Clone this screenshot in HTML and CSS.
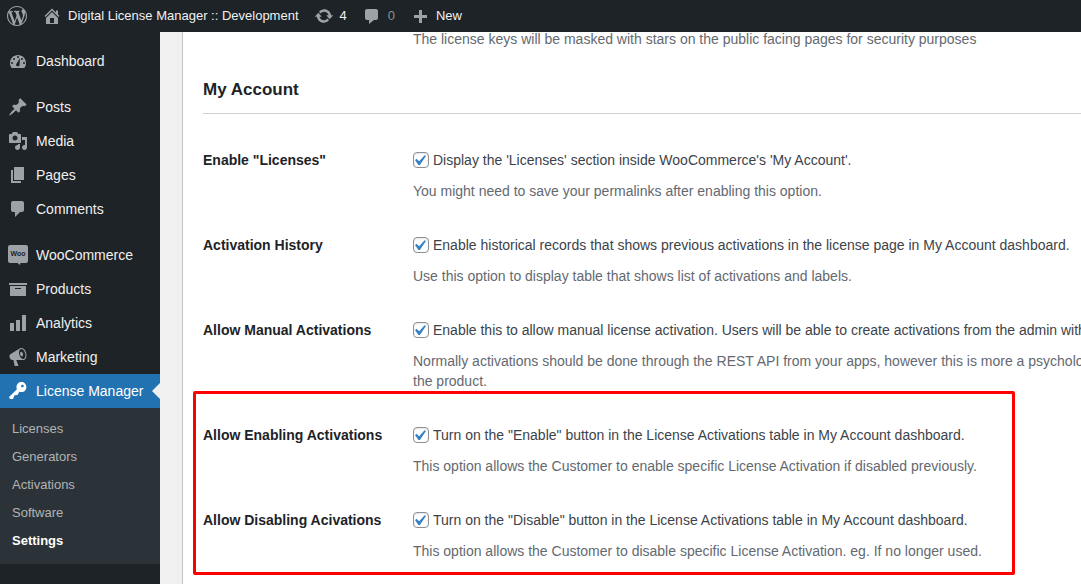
FILE: index.html
```html
<!DOCTYPE html>
<html lang="en">
<head>
    <meta charset="UTF-8">
    <meta name="viewport" content="width=device-width, initial-scale=1.0">
    <title>Settings - Digital License Manager</title>
    <link rel="stylesheet" href="styles.css">
</head>
<body>
    <header class="adminbar">
        <a class="bar-item bar-logo" href="#" aria-label="About WordPress">
            <svg class="icon" viewBox="0 0 20 20"><path d="M20 10c0-5.51-4.49-10-10-10C4.48 0 0 4.49 0 10c0 5.52 4.48 10 10 10 5.51 0 10-4.48 10-10zM7.78 15.37L4.37 6.22c.55-.02 1.17-.08 1.17-.08.5-.06.44-1.13-.06-1.11 0 0-1.45.11-2.37.11-.18 0-.37 0-.58-.01C4.12 2.69 6.87 1.11 10 1.11c2.33 0 4.45.87 6.05 2.34-.68-.11-1.65.39-1.65 1.58 0 .74.45 1.36.9 2.1.35.61.55 1.36.55 2.46 0 1.49-1.4 5-1.4 5l-3.03-8.37c.54-.02.82-.17.82-.17.5-.05.44-1.25-.06-1.22 0 0-1.44.12-2.38.12-.87 0-2.33-.12-2.33-.12-.5-.03-.56 1.2-.06 1.22l.92.08 1.26 3.41zM17.41 10c.24-.64.74-1.87.43-4.25.7 1.29 1.05 2.71 1.05 4.25 0 3.29-1.73 6.24-4.4 7.78.97-2.59 1.94-5.2 2.92-7.78zM6.1 18.09C3.12 16.65 1.11 13.53 1.11 10c0-1.3.23-2.48.72-3.59C3.25 10.3 4.67 14.2 6.1 18.09zm4.03-6.63l2.58 6.98c-.86.29-1.76.45-2.71.45-.79 0-1.57-.11-2.29-.33.81-2.38 1.62-4.74 2.42-7.1z"/></svg>
        </a>
        <a class="bar-item" href="#">
            <svg class="icon" viewBox="0 0 20 20"><path d="M16 8.5l1.53 1.53-1.06 1.06L10 4.6l-6.47 6.49-1.06-1.06L10 2.5l4 4v-2h2v4zm-6-2.46l6 5.99V18H4v-5.97zM12 17v-5H8v5h4z"/></svg>
            Digital License Manager :: Development
        </a>
        <a class="bar-item" href="#">
            <svg class="icon" viewBox="0 0 20 20"><path d="M10.2 3.28c3.53 0 6.43 2.61 6.92 6h2.08l-3.5 4-3.5-4h2.32c-.45-1.97-2.21-3.45-4.32-3.45-1.45 0-2.73.71-3.54 1.78L4.95 5.66C6.23 4.2 8.11 3.28 10.2 3.28zm-.4 13.44c-3.52 0-6.43-2.61-6.92-6H.8l3.5-4c1.17 1.33 2.33 2.67 3.5 4H5.48c.45 1.97 2.21 3.45 4.32 3.45 1.45 0 2.73-.71 3.54-1.78l1.71 1.95c-1.28 1.46-3.15 2.38-5.25 2.38z"/></svg>
            4
        </a>
        <a class="bar-item" href="#">
            <svg class="icon" viewBox="0 0 20 20"><path d="M5 3h9c1.1 0 2 .9 2 2v7c0 1.1-.9 2-2 2h-2l-5 4v-4H5c-1.1 0-2-.9-2-2V5c0-1.1.9-2 2-2z"/></svg>
            <span class="count-zero">0</span>
        </a>
        <a class="bar-item" href="#">
            <svg class="icon" viewBox="0 0 20 20"><path d="M17 9v3h-5v5H9v-5H4V9h5V4h3v5h5z"/></svg>
            New
        </a>
    </header>

    <div class="layout">
        <nav class="sidebar">
            <ul class="menu">
                <li><a class="menu-link" href="#">
                    <svg class="icon" viewBox="0 0 20 20"><path fill-rule="evenodd" d="M3.76 17h12.48c1.1-1.37 1.76-3.11 1.76-5 0-4.42-3.58-8-8-8s-8 3.58-8 8c0 1.89.66 3.63 1.76 5zM9 6a1 1 0 1 0 2 0a1 1 0 1 0-2 0zM5 8a1 1 0 1 0 2 0a1 1 0 1 0-2 0zM13 8a1 1 0 1 0 2 0a1 1 0 1 0-2 0zM3 12a1 1 0 1 0 2 0a1 1 0 1 0-2 0zM15 12a1 1 0 1 0 2 0a1 1 0 1 0-2 0zM8.6 12.5L12 7l-.4 6.5c0 1.1-.7 2-1.6 2s-2-.9-2-2c0-.4.2-.8.6-1z"/></svg>
                    Dashboard</a></li>
                <li class="separator"></li>
                <li><a class="menu-link" href="#">
                    <svg class="icon" viewBox="0 0 20 20"><path d="M10.44 3.02l1.82-1.82 6.36 6.35-1.83 1.82c-1.05-.68-2.48-.57-3.41.36l-.75.75c-.92.93-1.04 2.35-.35 3.41l-1.83 1.82-2.41-2.41-2.8 2.79c-.42.42-3.38 2.71-3.8 2.29s1.86-3.39 2.28-3.81l2.79-2.79L4.1 9.36l1.83-1.82c1.05.69 2.48.57 3.4-.36l.75-.75c.93-.92 1.05-2.35.36-3.41z"/></svg>
                    Posts</a></li>
                <li><a class="menu-link" href="#">
                    <svg class="icon" viewBox="0 0 20 20"><path d="M13 11V4c0-.55-.45-1-1-1h-1.67L9 1H5L3.67 3H2c-.55 0-1 .45-1 1v7c0 .55.45 1 1 1h10c.55 0 1-.45 1-1zM7 4.5c1.38 0 2.5 1.12 2.5 2.5S8.38 9.5 7 9.5 4.5 8.38 4.5 7 5.62 4.5 7 4.5zM14 6h5v10.5c0 1.38-1.12 2.5-2.5 2.5S14 17.88 14 16.5s1.12-2.5 2.5-2.5c.17 0 .34.02.5.05V9h-3V6zm-4 8.05V13h2v3.5c0 1.38-1.12 2.5-2.5 2.5S7 17.88 7 16.5 8.12 14 9.5 14c.17 0 .34.02.5.05z"/></svg>
                    Media</a></li>
                <li><a class="menu-link" href="#">
                    <svg class="icon" viewBox="0 0 20 20"><path d="M6 15V2h10v13H6zm-1 1h8v2H3V5h2v11z"/></svg>
                    Pages</a></li>
                <li><a class="menu-link" href="#">
                    <svg class="icon" viewBox="0 0 20 20"><path d="M5 2h9c1.1 0 2 .9 2 2v7c0 1.1-.9 2-2 2h-2l-5 5v-5H5c-1.1 0-2-.9-2-2V4c0-1.1.9-2 2-2z"/></svg>
                    Comments</a></li>
                <li class="separator"></li>
                <li><a class="menu-link" href="#">
                    <svg class="icon" viewBox="0 0 20 20"><path d="M2 0h16a2 2 0 0 1 2 2v14a2 2 0 0 1-2 2h-5.500l-.5 2-2.500-2H2a2 2 0 0 1-2-2V2a2 2 0 0 1 2-2z"/><text class="woo" x="10" y="11" text-anchor="middle">Woo</text></svg>
                    WooCommerce</a></li>
                <li><a class="menu-link" href="#">
                    <svg class="icon" viewBox="0 0 20 20"><path d="M19 4v2H1V4h18zM2 7h16v10H2V7zm11 3V9H7v1h6z"/></svg>
                    Products</a></li>
                <li><a class="menu-link" href="#">
                    <svg class="icon" viewBox="0 0 20 20"><path d="M18 18V2h-4v16h4zm-6 0V7H8v11h4zm-6 0v-8H2v8h4z"/></svg>
                    Analytics</a></li>
                <li><a class="menu-link" href="#">
                    <svg class="icon" viewBox="0 0 20 20"><path d="M18.15 5.94c.46 1.62.38 3.22-.02 4.48-.42 1.28-1.26 2.18-2.3 2.48-.16.06-.26.06-.4.06-.06.02-.12.02-.18.02-.06.02-.14.02-.22.02h-6.8l2.22 5.5c.02.14-.06.26-.14.34-.08.1-.24.16-.34.16H6.95c-.1 0-.26-.06-.34-.16-.08-.08-.16-.2-.14-.34l-1-5.5H4.25l-.02-.02c-.5.06-1.08-.18-1.54-.62s-.88-1.08-1.06-1.88c-.24-.8-.2-1.56-.02-2.2.18-.62.58-1.08 1.06-1.3l.02-.02 9-5.4c.1-.06.18-.1.24-.16.06-.04.14-.08.24-.12.16-.08.28-.12.5-.18 1.04-.3 2.24.1 3.22.98s1.84 2.24 2.26 3.86zm-2.58 5.98h-.02c.4-.1.74-.34 1.04-.7.58-.7.86-1.76.86-3.04 0-.64-.1-1.3-.28-1.98-.34-1.36-1.02-2.5-1.78-3.24s-1.68-1.1-2.46-.88c-.82.22-1.4.96-1.7 2-.32 1.04-.28 2.36.06 3.72.38 1.36 1 2.5 1.8 3.24.78.74 1.62 1.1 2.48.88zm-2.54-7.08c.22-.04.42-.02.62.04.38.16.76.48 1.02 1s.42 1.2.42 1.78c0 .3-.04.56-.12.8-.18.48-.44.84-.86.94-.34.1-.8-.06-1.14-.4s-.64-.86-.78-1.5c-.18-.62-.12-1.24.02-1.72s.48-.84.82-.94z"/></svg>
                    Marketing</a></li>
                <li>
                    <a class="menu-link current" href="#">
                    <svg class="icon" viewBox="0 0 20 20"><path d="M16.95 2.58c1.96 1.95 1.96 5.12 0 7.07-1.51 1.51-3.75 1.84-5.59 1.01l-1.87 3.31-2.99.31L5 18H2l-1-2 7.95-7.69c-.92-1.87-.62-4.18.93-5.73 1.95-1.96 5.12-1.96 7.07 0zm-2.51 3.79c.74 0 1.33-.6 1.33-1.34 0-.73-.59-1.33-1.33-1.33-.73 0-1.33.6-1.33 1.33 0 .74.6 1.34 1.33 1.34z"/></svg>
                    License Manager</a>
                    <ul class="submenu">
                        <li><a href="#">Licenses</a></li>
                        <li><a href="#">Generators</a></li>
                        <li><a href="#">Activations</a></li>
                        <li><a href="#">Software</a></li>
                        <li><a class="active" href="#">Settings</a></li>
                    </ul>
                </li>
            </ul>
        </nav>

        <main class="content">
            <form class="panel">
                <p class="description indent">The license keys will be masked with stars on the public facing pages for security purposes</p>

                <h2>My Account</h2>

                <div class="row">
                    <div class="row-title">Enable "Licenses"</div>
                    <div class="field">
                        <input type="checkbox" id="licenses" checked>
                        <label for="licenses">Display the 'Licenses' section inside WooCommerce's 'My Account'.</label>
                        <p class="description">You might need to save your permalinks after enabling this option.</p>
                    </div>
                </div>
                <div class="row">
                    <div class="row-title">Activation History</div>
                    <div class="field">
                        <input type="checkbox" id="history" checked>
                        <label for="history">Enable historical records that shows previous activations in the license page in My Account dashboard.</label>
                        <p class="description">Use this option to display table that shows list of activations and labels.</p>
                    </div>
                </div>
                <div class="row">
                    <div class="row-title">Allow Manual Activations</div>
                    <div class="field">
                        <input type="checkbox" id="manual" checked>
                        <label for="manual">Enable this to allow manual license activation. Users will be able to create activations from the admin with</label>
                        <p class="description">Normally activations should be done through the REST API from your apps, however this is more a psychological<br>the product.</p>
                    </div>
                </div>

                <div class="highlight">
                    <div class="row">
                        <div class="row-title">Allow Enabling Activations</div>
                        <div class="field">
                            <input type="checkbox" id="enabling" checked>
                            <label for="enabling">Turn on the "Enable" button in the License Activations table in My Account dashboard.</label>
                            <p class="description">This option allows the Customer to enable specific License Activation if disabled previously.</p>
                        </div>
                    </div>
                    <div class="row">
                        <div class="row-title">Allow Disabling Acivations</div>
                        <div class="field">
                            <input type="checkbox" id="disabling" checked>
                            <label for="disabling">Turn on the "Disable" button in the License Activations table in My Account dashboard.</label>
                            <p class="description">This option allows the Customer to disable specific License Activation. eg. If no longer used.</p>
                        </div>
                    </div>
                </div>
            </form>
        </main>
    </div>
</body>
</html>
```
FILE: styles.css
```css
* {
    margin: 0;
    padding: 0;
    box-sizing: border-box;
}

body {
    background: #f0f0f1;
    color: #3c434a;
    font-family: "Liberation Sans", Arial, sans-serif;
    font-size: 14px;
    line-height: 20px;
}

a {
    color: inherit;
    text-decoration: none;
}

ul {
    list-style: none;
}

.icon {
    width: 20px;
    height: 20px;
    flex: none;
    fill: #9ca2a7;
}

/* Top bar */
.adminbar {
    position: fixed;
    top: 0;
    left: 0;
    right: 0;
    z-index: 10;
    display: flex;
    height: 32px;
    background: #1d2327;
    color: #f0f0f1;
    font-size: 13px;
}

.bar-item {
    display: flex;
    align-items: center;
    gap: 6px;
    padding: 0 7px 0 8px;
    white-space: nowrap;
}

.bar-logo {
    padding: 0 7px;
}

.count-zero {
    color: #8c8f94;
}

.layout {
    display: flex;
    min-height: 100vh;
}

/* Side menu */
.sidebar {
    flex: none;
    width: 160px;
    padding-top: 44px;
    background: #1d2327;
    color: #f0f0f1;
}

.menu-link {
    display: flex;
    align-items: center;
    gap: 8px;
    height: 34px;
    padding-left: 8px;
    white-space: nowrap;
}

.menu-link .woo {
    fill: #1d2327;
    font-size: 7px;
    font-weight: bold;
}

.separator {
    height: 12px;
}

.menu-link.current {
    position: relative;
    background: #2271b1;
    color: #fff;
}

.menu-link.current .icon {
    fill: #fff;
}

.menu-link.current::after {
    content: "";
    position: absolute;
    right: 0;
    top: 9px;
    border: 8px solid transparent;
    border-left-width: 0;
    border-right-color: #f0f0f1;
}

.submenu {
    padding: 7px 0 9px;
    background: #2c3338;
    font-size: 13px;
}

.submenu a {
    display: block;
    padding: 4px 12px;
    color: #b0b3b6;
}

.submenu .active {
    color: #fff;
    font-weight: bold;
}

/* Settings form */
.content {
    flex: 1;
    min-width: 0;
    padding-left: 22px;
    overflow: hidden;
}

.panel {
    min-height: 100%;
    padding: 29px 0 0 20px;
    border-left: 1px solid #c3c4c7;
    background: #fff;
    white-space: nowrap;
}

h2 {
    margin: 29px 0 19px;
    padding-bottom: 11px;
    border-bottom: 1px solid #ccd0d4;
    color: #1d2327;
    font-size: 17px;
    line-height: 24px;
}

.row {
    display: grid;
    grid-template-columns: 210px 1fr;
    padding: 17px 0;
}

.row-title {
    color: #1d2327;
    font-weight: bold;
}

.field {
    display: grid;
    grid-template-columns: 16px 1fr;
    column-gap: 4px;
    align-items: center;
}

.description {
    color: #646970;
}

.field .description {
    grid-column: 1 / -1;
    margin-top: 11px;
}

.indent {
    margin-left: 210px;
}

input[type="checkbox"] {
    appearance: none;
    width: 16px;
    height: 16px;
    border: 1px solid #8c8f94;
    border-radius: 4px;
    background: #fff;
    box-shadow: inset 0 1px 2px rgba(0, 0, 0, 0.1);
}

input[type="checkbox"]:checked {
    background: #fff url("data:image/svg+xml,%3Csvg xmlns='http://www.w3.org/2000/svg' viewBox='0 0 20 20'%3E%3Cpath d='M14.83 4.89l1.34.94-5.81 8.38H9.02L5.78 9.67l1.34-1.25 2.57 2.4z' fill='%233582c4'/%3E%3C/svg%3E") -5px -3px / 21px 21px no-repeat;
}

.highlight {
    position: relative;
}

/* red frame around the two new options */
.highlight::after {
    content: "";
    position: absolute;
    top: -17px;
    bottom: 3px;
    left: -10px;
    right: 66px;
    border: 3px solid #f00;
    border-radius: 2px;
    pointer-events: none;
}
```
